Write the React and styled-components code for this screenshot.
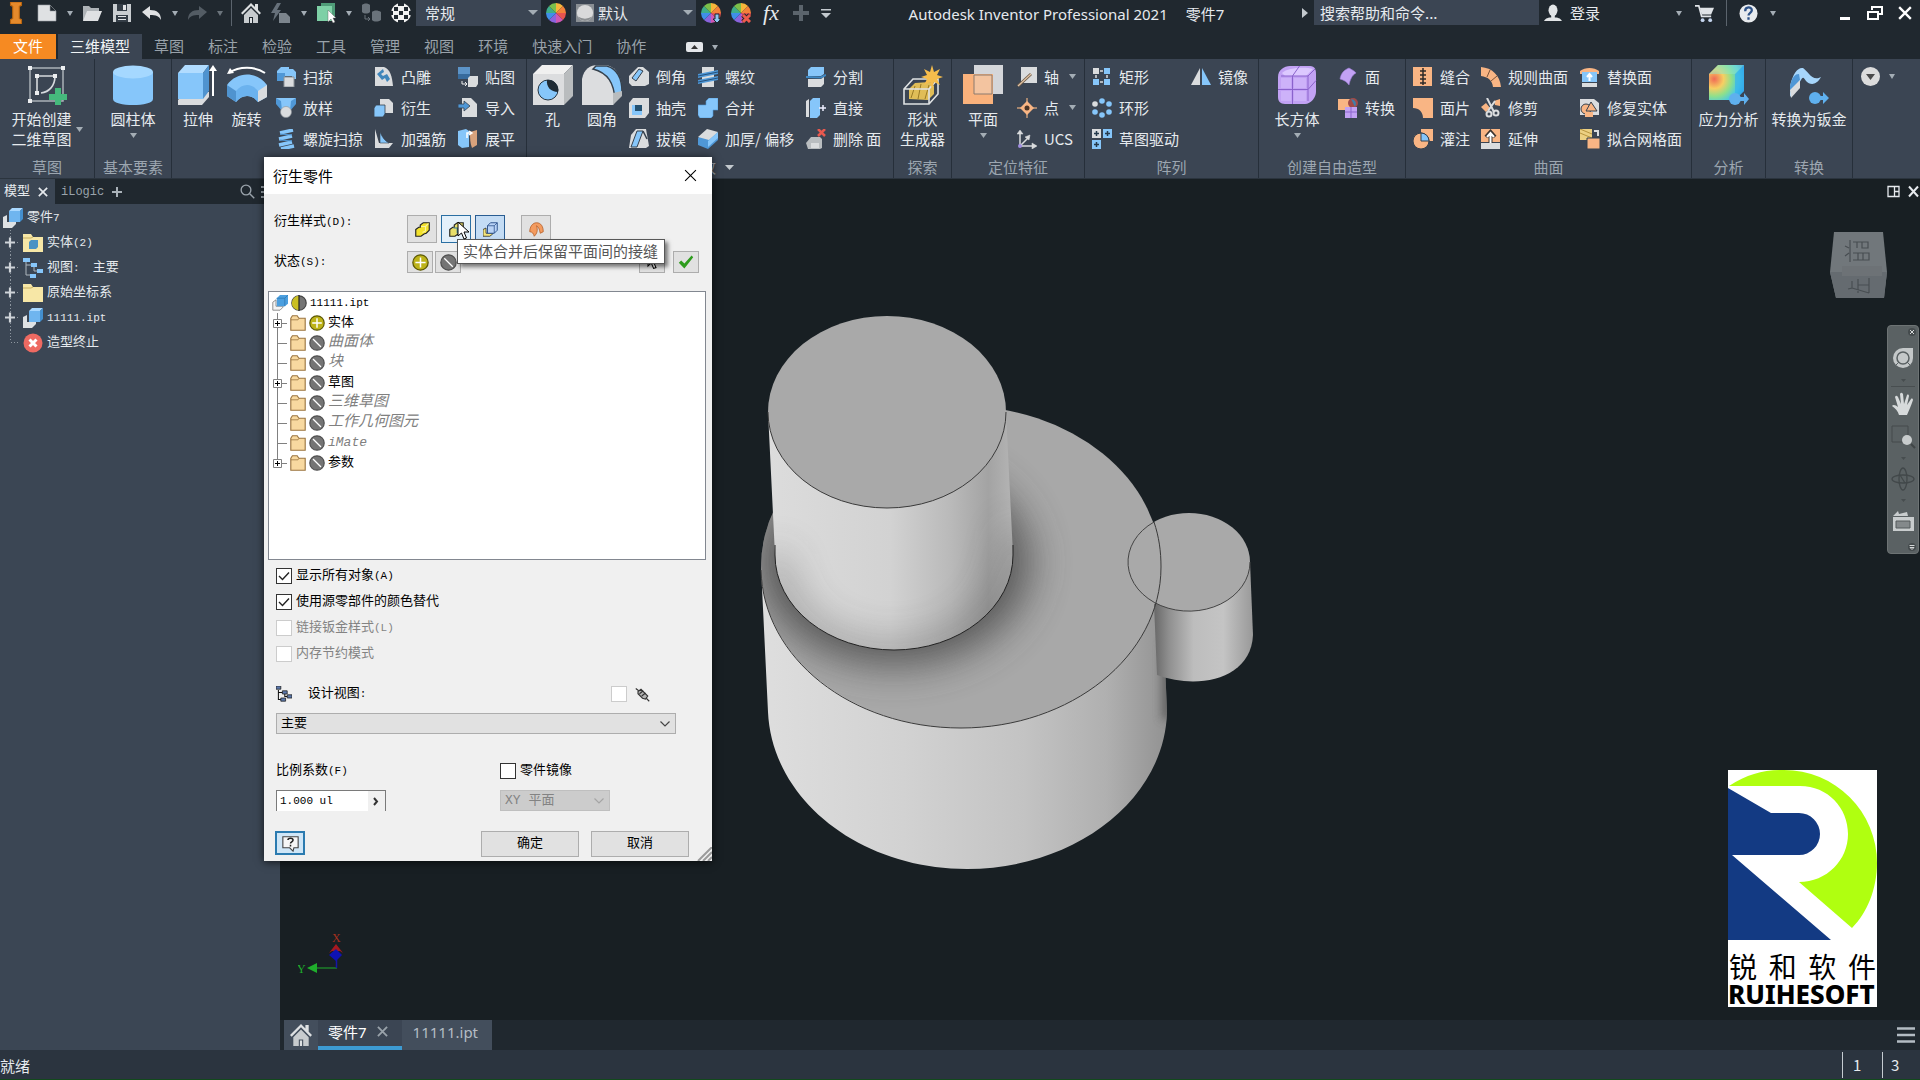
import React, { useState } from 'react'
import styled, { createGlobalStyle, css } from 'styled-components'

const sans = '"Noto Sans", "Noto Sans CJK SC", sans-serif'
const cjk = '"Noto Sans CJK SC", sans-serif'
const mono = '"Liberation Mono", "Noto Sans CJK SC", monospace'

const GlobalStyle = createGlobalStyle`
    * { box-sizing: border-box; }
    body {
        margin: 0;
        background: #181f23;
        font-family: ${sans};
        font-size: 15px;
        line-height: 20px;
        overflow: hidden;
    }
    button, input, select {
        font: inherit;
        color: inherit;
        margin: 0;
        padding: 0;
        border: 0;
        border-radius: 0;
        background: none;
        appearance: none;
        outline: none;
    }
    svg { display: block; flex: none; }
`
const Page = styled.div`
    display: flex;
    flex-direction: column;
    height: 100vh;
    color: #e6eaee;
    white-space: nowrap;
`
/* ---------- title bar ---------- */
const TitleBar = styled.header`
    display: flex;
    height: 34px;
    background: #20282f;
`
const Tool = styled.button`
    display: flex;
    align-items: center;
    justify-content: center;
    gap: 9px;
    width: ${props => props.$w || 30}px;
    height: 26px;
    flex: none;
`
const FormulaTool = styled(Tool)`
    font: italic 22px/22px "Liberation Serif", serif;
`
const Divider = styled.div`
    width: 1px;
    height: 26px;
    margin: 0 4px;
    background: #5b646d;
`
const ComboBox = styled.div`
    position: relative;
    display: flex;
    align-items: center;
    gap: 4px;
    width: 125px;
    height: 26px;
    padding-left: ${props => props.$icon ? 5 : 9}px;
    background: #3b4553;
    svg:last-child {
        position: absolute;
        right: 3px;
        top: 10px;
        pointer-events: none;
    }
`
const ComboSelect = styled.select`
    flex: 1;
    height: 26px;
    font-family: ${cjk};
`
const Title = styled.h1`
    display: flex;
    flex: 1;
    justify-content: center;
    gap: 18px;
    margin: 0;
    padding-top: 4px;
    font-size: 15px;
    font-weight: 400;
`
const Search = styled.input`
    width: 225px;
    height: 25px;
    margin-left: 2px;
    padding: 0 6px 1px;
    background: #3b4553;
    font-family: ${cjk};
    &::placeholder { color: #e6eaee; opacity: 1; }
`
const Login = styled.button`
    display: flex;
    align-items: center;
    gap: 8px;
    width: 132px;
    height: 26px;
    padding-left: 5px;
    font-family: ${cjk};
`
const WindowButtons = styled.div`
    display: flex;
    margin-left: 50px;
`
/* ---------- ribbon ---------- */
const TabBar = styled.nav`
    display: flex;
    height: 25px;
    background: #20282f;
`
const Tab = styled.button`
    height: 25px;
    padding: 0 12px 2px;
    font-family: ${cjk};
    color: #99a2aa;
    ${props => props.$active && css`
        background: #3b4553;
        color: #f0f3f5;
    `}
    ${props => props.$file && css`
        padding: 0 13px 2px;
        margin-right: 2px;
        background: #f68a22;
        color: #fff;
    `}
`
const Ribbon = styled.section`
    display: flex;
    height: 120px;
    background: #3b4553;
    border-bottom: 1px solid #2b343e;
    font-family: ${cjk};
`
const Group = styled.div`
    display: flex;
    flex-direction: column;
    flex: none;
    width: ${props => props.$w}px;
    border-right: 1px solid #262f3a;
`
const GroupBody = styled.div`
    display: flex;
    flex: 1;
    padding-top: 2px;
`
const Caption = styled.div`
    display: flex;
    align-items: center;
    justify-content: center;
    gap: 9px;
    height: 24px;
    padding-top: 2px;
    color: #9ca6b0;
`
const BigButton = styled.button`
    display: flex;
    flex-direction: column;
    align-items: center;
    flex: none;
    width: ${props => props.$w}px;
    height: 92px;
    padding-top: 4px;
    > span { margin-top: 4px; }
    > svg + span ~ svg { margin-top: 4px; }
`
const TwoLines = styled.span`
    display: flex;
    align-items: center;
    text-align: center;
    gap: 4px;
`
const Columns = styled.div`
    display: flex;
    padding-left: ${props => props.$pad ?? 7}px;
`
const Column = styled.div`
    width: ${props => props.$w || 90}px;
`
const SmallButton = styled.button`
    display: flex;
    align-items: center;
    gap: 7px;
    width: 100%;
    height: 31px;
    svg:last-child:not(:first-child) { margin-left: auto; }
`
const RibbonMenu = styled(Tool)`
    margin-top: 4px;
`
/* ---------- workspace ---------- */
const Workspace = styled.main`
    position: relative;
    display: flex;
    flex: 1;
    min-height: 0;
`
const Browser = styled.aside`
    width: 280px;
    flex: none;
    background: #3b4654;
    font-family: ${mono};
    font-size: 13px;
`
const BrowserTabs = styled.div`
    display: flex;
    align-items: center;
    height: 25px;
    background: #20282f;
    padding-right: 16px;
    gap: 6px;
`
const BrowserTab = styled.button`
    display: flex;
    align-items: center;
    gap: 8px;
    height: 25px;
    padding-left: 4px;
    ${props => !props.$active && css`
        padding-left: 0;
        font-size: 12px;
        color: #9aa3ab;
    `}
    ${props => props.$active && css`
        width: 55px;
        background: #3b4654;
    `}
`
const Spacer = styled.div`
    flex: 1;
`
const Gap = styled.span`
    width: ${props => props.$w}px;
`
const Nodes = styled.ul`
    list-style: none;
    margin: 0;
    padding: 1px 0 0;
`
const Node = styled.li`
    display: flex;
    align-items: center;
    gap: 4px;
    height: 25px;
    padding-left: ${props => props.$root ? 3 : 0}px;
`
const Latin = styled.span`
    font-family: "Liberation Mono", monospace;
    font-size: ${props => props.$big ? 13 : 11}px;
`
const ViewArea = styled.div`
    display: flex;
    flex-direction: column;
    flex: 1;
    min-width: 0;
`
const Viewport = styled.div`
    position: relative;
    flex: 1;
    background: #181f23;
`
const Placed = styled.div`
    position: absolute;
    left: ${props => props.$left}px;
    right: ${props => props.$right}px;
    top: ${props => props.$top}px;
    bottom: ${props => props.$bottom}px;
`
const NavBar = styled.div`
    position: absolute;
    right: 1px;
    top: 146px;
    display: flex;
    flex-direction: column;
    align-items: center;
    width: 32px;
    height: 229px;
    padding: 2px 0;
    border: 1px solid #6d7374;
    border-radius: 4px;
    background: #5a6163;
`
const Watermark = styled.div`
    position: absolute;
    right: 43px;
    bottom: 13px;
    width: 149px;
    height: 237px;
    background: #fff;
    color: #000;
`
const BrandCjk = styled.div`
    display: flex;
    justify-content: space-between;
    padding: 11px 1px 0;
    font: 28px/30px ${cjk};
`
const BrandLatin = styled.div`
    font: 800 26px/26px "Noto Sans", sans-serif;
`
const DocTabs = styled.div`
    display: flex;
    height: 30px;
    padding-left: 4px;
    padding-right: 5px;
    background: #20282f;
`
const DocTab = styled.button`
    display: flex;
    align-items: center;
    gap: 10px;
    padding: 0 6px;
    height: 30px;
    background: #434e5c;
    color: #b4bcc4;
    ${props => !props.$active && !props.$home && css`padding: 0 14px 7px 11px;`}
    ${props => props.$active && css`
        padding: 0 14px 3px 10px;
        background: #3b4553;
        border-bottom: 4px solid #3d9bd3;
        color: #fff;
    `}
`
const StatusBar = styled.footer`
    display: flex;
    height: 30px;
    padding-top: 2px;
    background: #2b343f;
    border-bottom: 1px solid #12491c;
    line-height: 28px;
    font-family: ${cjk};
`
const Count = styled.div`
    width: ${props => props.$w}px;
    height: 26px;
    padding-left: ${props => props.$pad}px;
    border-left: 1px solid #c6ccd2;
    line-height: 25px;
`
/* ---------- dialog ---------- */
const Dialog = styled.form`
    position: absolute;
    z-index: 2;
    left: 264px;
    top: -22px;
    width: 448px;
    height: 704px;
    background: #f0f0f0;
    color: #000;
    font-family: ${mono};
    font-size: 13px;
    line-height: 14px;
    box-shadow: 0 1px 8px rgba(0, 0, 0, 0.7);
`
const DialogTitle = styled.div`
    display: flex;
    align-items: center;
    justify-content: space-between;
    height: 37px;
    padding: 0 15px 0 9px;
    background: #fff;
    font: 15px/20px ${cjk};
`
const Line = styled.div`
    display: flex;
    align-items: ${props => props.$align || 'flex-start'};
    gap: ${props => props.$gap || 0}px;
    margin-top: ${props => props.$mt || 0}px;
    padding: 0 ${props => props.$pr ?? 13}px 0 ${props => props.$pl ?? 10}px;
`
const Buttons = styled.div`
    display: flex;
    gap: 4px;
`
const FieldName = styled.span`
    width: ${props => props.$w || 133}px;
`
const IconButton = styled.button`
    display: flex;
    align-items: center;
    justify-content: center;
    width: ${props => props.$small ? 26 : 30}px;
    height: ${props => props.$small ? 22 : 28}px;
    border: 1px solid #adadad;
    background: #e1e1e1;
    ${props => props.$hot && css`
        border-color: #2a6fa3;
        background: #e3f0fa;
    `}
    ${props => props.$on && css`
        border-color: #2a5d92;
        background: #c4dcf4;
    `}
`
const ObjectTree = styled.ul`
    list-style: none;
    height: 269px;
    margin: 18px 6px 0 4px;
    padding: 1px 0 0 3px;
    border: 1px solid #828790;
    background: #fff;
`
const ObjectRow = styled.li`
    display: flex;
    align-items: center;
    gap: 3px;
    height: 20px;
    ${props => props.$off && css`
        color: #808080;
        font-size: 15px;
        font-style: italic;
    `}
`
const Checks = styled.div`
    padding: 3px 12px 0;
`
const CheckLabel = styled.label`
    display: flex;
    align-items: center;
    gap: 4px;
    height: ${props => props.$h || 26}px;
    color: ${props => props.$off ? '#838383' : '#000'};
`
const CheckBox = styled.input.attrs({ type: 'checkbox' })`
    width: 16px;
    height: 16px;
    border: 1px solid #333;
    background: #fff;
    &:disabled { border-color: #ccc; }
    &:checked {
        background: #fff url("data:image/svg+xml,%3Csvg xmlns='http://www.w3.org/2000/svg' viewBox='0 0 14 14'%3E%3Cpath d='M2 7l3.5 3.5L12 3.5' fill='none' stroke='%23222' stroke-width='1.4'/%3E%3C/svg%3E");
    }
`
const SelectBox = styled.div`
    position: relative;
    width: ${props => props.$w}px;
    height: 21px;
    border: 1px solid ${props => props.$off ? '#bfbfbf' : '#adadad'};
    background: ${props => props.$off ? '#ccc' : '#e1e1e1'};
    color: ${props => props.$off ? '#838383' : '#000'};
    select {
        width: 100%;
        height: 19px;
        padding-left: 4px;
        opacity: 1;
    }
    svg {
        position: absolute;
        right: 5px;
        top: 7px;
        pointer-events: none;
    }
`
const ScaleGrid = styled.div`
    display: grid;
    grid-template-columns: 224px 110px;
    row-gap: 9px;
    align-items: center;
    margin-top: 27px;
    padding-left: 12px;
`
const NumberBox = styled.div`
    display: flex;
    align-items: center;
    width: 110px;
    height: 21px;
    border: 1px solid #7a7a7a;
    border-bottom: 0;
    input {
        width: 91px;
        height: 20px;
        padding-left: 3px;
        background: #fff;
        font-size: 11px;
    }
    button { width: 17px; padding-left: 5px; }
`
const PushButton = styled.button`
    width: 98px;
    height: 26px;
    border: 1px solid #adadad;
    background: #e1e1e1;
`
const HelpButton = styled.button`
    display: flex;
    align-items: center;
    justify-content: center;
    width: 30px;
    height: 24px;
    border: 2px solid #2b7bb0;
    background: #cfe6f7;
`
const Tooltip = styled.div`
    position: absolute;
    left: 193px;
    top: 82px;
    height: 25px;
    padding: 0 6px 0 5px;
    border: 1px solid #575757;
    background: #fff;
    box-shadow: 3px 3px 4px rgba(0, 0, 0, 0.5);
    color: #575757;
    font: 15px/22px ${cjk};
`
const Pointer = styled.svg`
    position: absolute;
    left: 193px;
    top: 64px;
    z-index: 1;
`
const Grip = styled.svg`
    position: absolute;
    right: 0;
    bottom: 0;
`

/* ---------- drawings ---------- */
const B = '#86c6fa'
const D = '#4f97d6'
const G = '#dadcde'
const O = '#f9b584'
const P = '#c2a2f4'
const K = '#35404c'

const Icon = ({ name, size = 20 }) => (
    <svg width={size} height={size} viewBox="0 0 20 20" fill="none" aria-hidden="true">{small[name]}</svg>
)
const Large = ({ name }) => (
    <svg width="40" height="40" viewBox="0 0 40 40" fill="none" aria-hidden="true">{large[name]}</svg>
)
const Caret = ({ w = 7, color = '#a4adb5' }) => (
    <svg width={w} height="5" viewBox="0 0 8 5" preserveAspectRatio="none" aria-hidden="true"><path d="M0 0h8L4 5z" fill={color} /></svg>
)
const Chevron = ({ color = '#444' }) => (
    <svg width="10" height="6" viewBox="0 0 10 6" fill="none" aria-hidden="true"><path d="M.5.5L5 5 9.5.5" stroke={color} strokeWidth="1.2" /></svg>
)
const Cross = ({ size = 12, color = '#e6eaee', sw = 1.5 }) => (
    <svg width={size} height={size} viewBox="0 0 12 12" aria-hidden="true"><path d="M1 1l10 10M11 1L1 11" stroke={color} strokeWidth={sw} /></svg>
)
// eight slices, clockwise from the top
const wheel = (
    <g>
        <path d="M10 10V0a10 10 0 0 1 7 3z" fill="#f7b53a" />
        <path d="M10 10l7-7a10 10 0 0 1 3 7z" fill="#f3823a" />
        <path d="M10 10h10a10 10 0 0 1-3 7z" fill="#e8544e" />
        <path d="M10 10l7 7a10 10 0 0 1-7 3z" fill="#cf57b4" />
        <path d="M10 10v10a10 10 0 0 1-7-3z" fill="#8a63dd" />
        <path d="M10 10l-7 7a10 10 0 0 1-3-7z" fill="#3f8fe8" />
        <path d="M10 10H0a10 10 0 0 1 3-7z" fill="#3fae8a" />
        <path d="M10 10L3 3a10 10 0 0 1 7-3z" fill="#7cc04a" />
    </g>
)
const houseShape = (
    <g>
        <path d="M10 0L0 10l1.500 1.500L10 3l8.500 8.500L20 10l-3-3V1h-3v3z" fill="#dde0e2" />
        <path d="M3 12l7-7 7 7v8h-5v-6H8v6H3z" fill="#c7cbce" />
        <path d="M9 15h2v5H9z" fill="#dde0e2" />
    </g>
)
const part = (
    <g>
        <path d="M0 9l4-2v7h9v2l-4 4H0z" fill="#dfe2e4" />
        <path d="M6 3l3-3h11l-3 3z" fill="#a9d8ff" />
        <path d="M6 3h11v11H6z" fill="#6fb5ef" />
        <path d="M17 3l3-3v11l-3 3z" fill="#438fcf" />
    </g>
)
const small = {
    wheel,
    home: houseShape,
    part,
    logo: <path d="M5 0h10v3l-2 1v11l2 1v4H5v-4l2-1V4L5 3z" fill="#e58a2c" stroke="#b8640f" />,
    newDoc: <path d="M1 2h12l6 6v10H1z M13 2v6h6" fill="#dfe1e3" stroke="#9aa0a5" strokeWidth=".6" />,
    open: <g><path d="M1 18V3h6l2 2h8v3" fill="#aeb3b7" /><path d="M1 18L5 8h15l-4 10z" fill="#dfe1e3" /></g>,
    save: <g><path d="M1 1h18v18H1z" fill="#c9cdd0" /><path d="M5 1h10v7H5zM4 12h12v7H4z" fill="#343d46" /><path d="M11 2h3v5h-3zM6 13h8v1H6zM6 16h8v1H6z" fill="#e2e4e6" /></g>,
    undo: <path d="M0 9l8-6v4c7 0 11 3 11 10-2-4-5-5-11-5v4z" fill="#dfe1e3" />,
    redo: <path d="M20 9l-8-6v4C5 7 1 10 1 17c2-4 5-5 11-5v4z" fill="#535c64" />,
    update: <g><path d="M6 0L0 10h4L2 18l8-11H6l4-7z" fill="#66707a" /><path d="M8 10h7l4 4v6H8z" fill="#7c858d" /></g>,
    pick: <g><path d="M5 0h14v14H5z" fill="#4f9c78" /><path d="M1 3h15v15H1z" fill="#7ed0a6" /><path d="M12 7v12l3-3 2 4 2-1-2-4h3z" fill="#fff" stroke="#555" strokeWidth=".4" /></g>,
    material: <g fill="#6a737b"><path d="M1 2c2-2 6-2 8 0v7c-2 2-6 2-8 0zM11 9c2-2 6-2 9 0v8c-3 2-7 2-9 0z" /><path d="M4 12v4h5M7 14l2 2-2 2" stroke="#6a737b" fill="none" /></g>,
    checker: <g><circle cx="10" cy="10" r="10" fill="#f2f2f2" /><path d="M7 0h6v3H7zM3 4h4v4H3zM13 4h4v4h-4zM8 8h4v4H8zM0 8h2v4H0zM18 8h2v4h-2zM3 12h4v4H3zM13 12h4v4h-4zM7 17h6v3H7z" fill="#20282f" /></g>,
    sphere: <g><path d="M0 0h20v20H0z" fill="#8a8f94" /><circle cx="10" cy="10" r="9" fill="#d9dadb" /><path d="M2 14a9 9 0 0 0 16 0 16 16 0 0 1-16 0z" fill="#8b8f92" /></g>,
    wheelAdd: <g>{wheel}<path d="M14 11h4v5h2l-4 4-4-4h2z" fill="#8cc4f0" stroke="#20282f" /></g>,
    wheelDel: <g>{wheel}<path d="M12 12l7 7M19 12l-7 7" stroke="#20282f" strokeWidth="5" /><path d="M12 12l7 7M19 12l-7 7" stroke="#ee5a4c" strokeWidth="3" /></g>,
    plus: <path d="M8 2h4v6h6v4h-6v6H8v-6H2V8h6z" fill="#5b646c" />,
    user: <g fill="#e2e5e7"><ellipse cx="10" cy="7" rx="5" ry="6.500" /><path d="M8 12h4v3c5 0 7 2 8 4H0c1-2 3-4 8-4z" /></g>,
    cart: <g><path d="M0 2h4l3 11h10" stroke="#dfe3e7" strokeWidth="1.800" /><path d="M5 4h15l-3 7H7z" fill="#dfe3e7" /><circle cx="8" cy="17" r="2" fill="#c5d5ee" /><circle cx="16" cy="17" r="2" fill="#c5d5ee" /></g>,
    help: <g><circle cx="10" cy="10" r="9.500" fill="#e8ebee" /><path d="M6.500 7.500c0-5 7-5 7-.8 0 2.600-3.500 2.600-3.500 5.300M10 14v2.500" stroke="#2d5288" strokeWidth="2.400" /></g>,
    sweep: <g><path d="M1 4l4-4h8v2h4l3 3v7h-4V9H9v5H1z" fill={B} /><path d="M1 6h8v8H1z" fill={D} /><path d="M8 10h10v10H8z" fill={G} stroke="#8b9298" /></g>,
    loft: <g><path d="M0 0h20l-5 11H5z" fill={B} /><path d="M0 0l5 3 1 10-6-7zM20 0l-5 3-1 10 6-7z" fill={D} /><circle cx="10" cy="14" r="5.500" fill={G} stroke="#8b9298" strokeWidth=".6" /></g>,
    coil: <g stroke={B} strokeWidth="3.500"><path d="M4 4l13-3M3 10l13-3M3 16l13-3M5 20l13-3" /><path d="M4 5l12 1M4 11l12 1" stroke={D} strokeWidth="1" /></g>,
    emboss: <g><path d="M1 0h9c6 2 8 9 9 19H1z" fill={G} /><path d="M3 7l6-5 1 3-3 2 2 2 4-2 3 5-3 3-2-4-3 2z" fill="#3f86bb" /></g>,
    derive: <g><path d="M6 1h9l4 4v10H6z" fill={G} /><path d="M0 10l2-3h9v9l-2 3H0z" fill={B} stroke={K} strokeWidth=".8" /></g>,
    rib: <g><path d="M1 0l4 14h14l-4 5H1z" fill={G} /><path d="M6 3v11h9c-4-2-7-6-9-11z" fill={B} stroke={K} strokeWidth=".6" /></g>,
    decal: <g><path d="M0 0h12v12H0z" fill="#5c94c8" /><path d="M0 7h12v5H0z" fill="#376b9d" /><path d="M10 11l2-2h8v8l-2 3h-8z" fill={G} /><path d="M4 14v3h5M7 15l2 2-2 2" stroke="#eee" /></g>,
    importIcon: <g><path d="M4 0h9l6 6v13H4z" fill={G} /><path d="M0 6h6V3l6 5-6 5v-3H0z" fill={D} stroke={K} strokeWidth=".8" /></g>,
    unfold: <g><path d="M0 2l8-2 3 2v16l-7 1-4-3z" fill={B} /><path d="M12 3l7-2v15l-5 3c-2-5-2-10-2-16z" fill="#d8a27c" /><path d="M9 9V4h4M11 2l3 2-3 2" stroke="#fff" strokeWidth="1.500" /></g>,
    chamfer: <g><path d="M0 9l9-9h5l6 5v12l-4 2H3l-3-3z" fill={G} /><path d="M3 11l7-9 4 2-7 10z" fill={B} stroke={K} /></g>,
    shell: <g><path d="M0 5l4-5h16v15l-4 5H0z" fill={G} /><path d="M3 7h10v10H3z" fill="#24506f" /><path d="M3 7h3v6h7v4H3z" fill={B} /></g>,
    draft: <g><path d="M2 6l5-6h10l3 17-3 2H0z" fill={G} /><path d="M8 2h6L8 18H2z" fill={B} stroke={K} /><path d="M14 2l4 8" stroke={K} strokeWidth="1.500" /></g>,
    thread: <g><path d="M4 0h12v20H4z" fill={G} /><path d="M0 7l20-4v4L0 11zM0 13l20-4v4L0 17z" fill={D} /><path d="M0 9l20-4M0 15l20-4" stroke="#27527a" /></g>,
    combine: <path d="M8 3l3-3h9v12h-5v6l-2 2H2l-2-3V7h8z" fill={B} stroke={D} strokeWidth=".6" />,
    thicken: <g><path d="M0 9l9-8 11 3v7L10 20 0 16z" fill={D} /><path d="M0 8l9-8 11 3-9 8z" fill={G} /><path d="M10 12l10-9v6l-10 9z" fill={B} /></g>,
    split: <g><path d="M2 3l3-3h13v7l-3 2H2z" fill={B} /><path d="M0 10l15 .5L20 8" stroke="#3e88c4" strokeWidth="2" /><path d="M2 12h13l3-2v7l-3 3H2z" fill={G} /></g>,
    direct: <g><path d="M0 3l3-2v18H0z" fill={G} /><path d="M4 3l3-3h7v17l-3 3H4z" fill={B} /><path d="M13 10h7M17 7v6" stroke="#eef" strokeWidth="1.500" /></g>,
    deleteFace: <g><path d="M0 14l5-6h9l2 2v9l-2 1H2z" fill="#b9bdc0" /><path d="M5 14h8v5H5z" fill={G} /><path d="M12 0l7 7M19 0l-7 7" stroke="#e8594f" strokeWidth="2.500" /></g>,
    axis: <g><path d="M4 0h16v16H4z" fill={G} /><path d="M1 19L14 7" stroke="#6c5a48" strokeWidth="3" /><path d="M1 19L14 7" stroke="#e2c4a6" strokeWidth="1.200" /></g>,
    point: <g><path d="M10 0v20M0 10h20" stroke="#c89b78" strokeWidth="1.500" /><path d="M10 3l7 7-7 7-7-7z" fill={O} /><circle cx="10" cy="10" r="2.500" fill="#4b3527" /></g>,
    ucs: <g stroke={G} strokeWidth="1.500"><path d="M3 2v15h16M3 17l9-9" /><path d="M0 5l3-4 3 4zM15 14l5 3-5 3zM8 8l5-2-1 5z" fill={G} strokeWidth=".5" /><circle cx="3" cy="17" r="2" fill="#9f8de0" stroke="none" /></g>,
    rect: <g><path d="M1 1h6v6H1z" fill={G} /><path d="M12 1h6v6h-6zM1 12h6v6H1zM12 12h6v6h-6z" fill={B} /><path d="M8 4h3M4 8v3M15 8v3M8 15h3" stroke={G} strokeWidth="1.500" /></g>,
    ring: <g fill={B}><circle cx="10" cy="3" r="2.800" /><circle cx="17" cy="6" r="2.800" /><circle cx="17" cy="14" r="2.800" /><circle cx="10" cy="17" r="2.800" /><circle cx="3" cy="14" r="2.800" /><circle cx="3" cy="6" r="2.800" fill={G} /></g>,
    sketchDriven: <g><path d="M0 0h9v9H0z" fill={G} /><path d="M11 0h9v9h-9zM0 11h9v9H0z" fill={B} /><path d="M2 4.500h5M4.500 2v5M13 4.500h5M15.500 2v5M2 15.500h5M4.500 13v5" stroke="#263a4c" strokeWidth="1.500" /></g>,
    mirror: <g><path d="M9 1v17H0z" fill={G} /><path d="M11 1v17h9z" fill={B} /></g>,
    face: <path d="M2 12C3 6 6 3 11 1c3 2 6 3 7 5-4 2-6 7-7 12-2-3-5-5-9-6z" fill={P} stroke="#9e7cd8" strokeWidth=".6" />,
    convert: <g><path d="M0 1h12v11H0z" fill={O} /><circle cx="15" cy="5" r="5" fill="#a04b48" /><path d="M13 1a5 5 0 0 1 4 8z" fill="#3f7fa8" /><path d="M7 9h12v11H7z" fill={P} /><path d="M13 9v11M7 14h12" stroke="#8d66cf" /></g>,
    stitch: <g><path d="M0 0h19v19H0z" fill={O} /><path d="M10 1v17M7 4h6M7 8h6M7 12h6M7 16h6" stroke="#2e2a28" strokeWidth="1.500" /></g>,
    patch: <path d="M0 0h20v20H10c0-6-4-10-10-10z" fill={O} />,
    sculpt: <g><path d="M8 0h12v12H8z" fill={O} /><circle cx="8" cy="12" r="8" fill={O} stroke={K} /><path d="M8 4v8h8a8 8 0 0 0-8-8z" fill={B} stroke={K} /></g>,
    ruled: <g><path d="M0 0c11 1 19 8 20 20h-8C11 13 7 10 0 9z" fill={O} /><path d="M9 3L6 10M16 9l-6 5" stroke="#7a5238" /></g>,
    trim: <g><path d="M0 9l5-4 4 5-4 4zM13 3l6-2v7l-5-1z" fill={O} /><path d="M6 0l7 14M14 3L7 13" stroke={G} strokeWidth="2" /><circle cx="8" cy="16" r="2.500" stroke={G} strokeWidth="2" /><circle cx="15" cy="15" r="2.500" stroke={G} strokeWidth="2" /></g>,
    extend: <g><path d="M0 0h19v13H0z" fill={O} /><path d="M0 14h19v6H0z" fill={G} /><path d="M9.500 14V4M5 8l4.500-5L14 8" stroke="#3b3430" strokeWidth="4" /><path d="M9.500 14V4M6 8l3.500-4L13 8" stroke="#fff" strokeWidth="2" /></g>,
    replace: <g><path d="M0 4c5-4 14-4 19 0v3H0z" fill={O} /><path d="M2 5h15v10H2z" fill={B} /><path d="M2 16h15v4H2z" fill={G} /><path d="M9.500 14V8M7 10l2.500-3L12 10" stroke="#fff" strokeWidth="2" /></g>,
    repair: <g><path d="M0 1h14l5 4v12H0z" fill={G} /><circle cx="6" cy="11" r="5" fill={O} stroke={K} /><path d="M11 4l6 9H6z" fill={O} stroke={K} /><path d="M5 14h8v5H5z" fill={O} /></g>,
    fitMesh: <g><path d="M0 0h12v11H0z" fill="#ecd083" /><path d="M0 4l12 5M0 0l12 5" stroke="#b7953e" /><path d="M14 2h4v5" stroke={G} strokeWidth="2" /><path d="M7 9h13v11H7z" fill={O} stroke={K} /></g>,
    folderPart: <g><path d="M0 1h8l2 3h10v15H0z" fill="#f7e7a6" /><path d="M0 5h8l2-1" stroke="#c9b060" /><path d="M6 9l2-2h7v7l-2 2H6z" fill="#4b93c4" /></g>,
    folder: <g><path d="M0 1h8l2 3h10v15H0z" fill="#f7e7a6" /><path d="M0 5h8l2-1" stroke="#c9b060" /></g>,
    views: <g><path d="M0 0h7v4H0zM8 5h6v4H8zM14 11h6v4h-6zM7 16h6v4H7z" fill={B} /><path d="M3 4v13h4M3 7h5M11 9v4h3" stroke="#aeb6bd" /></g>,
    end: <g><circle cx="10" cy="10" r="9.500" fill="#ee6a62" /><path d="M6.500 6.500l7 7M13.500 6.500l-7 7" stroke="#fff" strokeWidth="3" /></g>,
    search: <g stroke="#9aa3ab" strokeWidth="1.800"><circle cx="8" cy="8" r="6.500" /><path d="M13 13l6 6" /></g>,
    // dialog icons
    bodyMerge: <g><path d="M1 10l4-3h2V4l4-3h8v10l-4 4-3 1-4 3H1z" fill="#f3e22c" stroke="#222" strokeWidth="1.500" /><path d="M8 6h6l4-4M14 6v6l-4 2" stroke="#fbf4a0" strokeWidth="1.500" /></g>,
    bodySeam: <g><path d="M1 10l4-3h2V4l4-3h8v10l-4 4-3 1-4 3H1z" fill="#e9df6a" stroke="#222" strokeWidth="1.500" /><path d="M6 8h5v7" stroke="#2c7ba8" strokeWidth="1.500" /></g>,
    bodyMulti: <g><path d="M0 10l4-2v7h9v1l-4 3H0z" fill="#f4e57a" stroke="#222" /><path d="M6 5l4-4h9v10l-4 4H6z" fill="#b9d3f6" stroke="#234a86" strokeWidth="1.200" /><path d="M6 5h9v10M15 5l4-4" stroke="#234a86" /></g>,
    surface: <path d="M1 13C1 6 5 1 10 1c6 0 9 5 9 12l-4 2c-1-5-2-8-5-10 2 6 1 10-3 14-1-4-3-6-6-6z" fill="#f39b5f" stroke="#b0571f" />,
    include: <g><circle cx="10" cy="10" r="9" fill="#bdb319" stroke="#5d5906" strokeWidth="1.500" /><path d="M10 4v12M4 10h12" stroke="#fff" strokeWidth="1.800" /></g>,
    exclude: <g><circle cx="10" cy="10" r="9" fill="#747474" stroke="#505050" strokeWidth="1.500" /><path d="M5 5l10 10" stroke="#fff" strokeWidth="1.500" /></g>,
    half: <g><circle cx="10" cy="10" r="9" fill="#747474" stroke="#444" strokeWidth="1.500" /><path d="M10 1a9 9 0 0 0 0 18z" fill="#cabf23" /><path d="M10 0v20" stroke="#222" strokeWidth="1.500" /></g>,
    treeFolder: <g><path d="M1 4l2-3h6l2 3h8v15H1z" fill="#f8d9a0" stroke="#9a7440" strokeWidth="1.400" /><path d="M1 6h9l2-2" stroke="#9a7440" /></g>,
    treePart: <g><path d="M1 9l4-3v8h9v1l-4 4H1z" fill="#f4f4f4" stroke="#777" /><path d="M6 4l4-4h10v11l-4 3H6z" fill="#4b9fdf" /><path d="M6 4h10v10M16 4l4-4" stroke="#2f78b4" /></g>,
    tick: <path d="M1 11l3-3 4 4L17 2l2 2L8 18z" fill="#2e9c1d" />,
    arrow: <path d="M5 1v14l4-4 3 7 3-1-3-7h5z" fill="#fff" stroke="#000" strokeWidth="1.300" />,
    designView: <g><path d="M0 0h6v4H0zM8 6h6v4H8zM14 11h6v4h-6zM6 15h6v4H6z" fill="#5c79ad" stroke="#222" /><path d="M3 5v12h3M3 8h5M11 10v3h3" stroke="#111" strokeWidth="1.300" /></g>,
    link: <g stroke="#333" strokeWidth="1.500"><path d="M1 2l4 3M15 15l4 4" /><path d="M4 6l4-3 9 9-3 4-4-1-6-6z" fill="#b3b3b3" /><path d="M6 9l5-4M9 12l5-4" /></g>,
    helpBubble: <g><path d="M1 2h18v13h-5l-1 4-4-4H1z" fill="#f6f6f6" stroke="#444" strokeWidth="1.300" /><path d="M7 6c0-3 6-3 6 0 0 2-3 2-3 4M10 11.500v2" stroke="#222" strokeWidth="1.800" /></g>,
}
const large = {
    sketch: <g><path d="M3 3h33v33H3z" stroke="#aab1b8" strokeWidth="1.500" /><path d="M1 1h4v4H1zM34 1h4v4h-4zM1 34h4v4H1z" fill="#eceef0" /><path d="M10 12v16M11 11h17c0 10-6 16-14 17" stroke="#d7dade" strokeWidth="1.600" /><path d="M8 9h4v4H8zM26 9h4v4h-4zM8 26h4v4H8z" fill="#eceef0" /><path d="M28 23h6v6h6v6h-6v5h-6v-5h-6v-6h6z" fill="#45b97c" /></g>,
    cylinder: <g><path d="M0 7v27c0 8 40 8 40 0V7z" fill={B} /><ellipse cx="20" cy="7" rx="20" ry="6.500" fill="#a5d8ff" /></g>,
    extrude: <g><path d="M0 35l8-8h23v5l-7 8H0z" fill={G} /><path d="M0 8l7-8h24l-6 8z" fill="#b1dcff" /><path d="M0 8h25v26H0z" fill={B} /><path d="M25 8l6-8v26l-6 8z" fill="#4f93cf" /><path d="M35 31V3" stroke="#fff" strokeWidth="2" /><path d="M31 6l4-6 4 6z" fill="#fff" /></g>,
    revolve: <g><path d="M0 20c10-14 30-14 40 0v12l-9 5c-6-8-16-8-22 0l-9-6z" fill={B} /><path d="M0 20l9 6v11l-9-6z" fill="#4f93cf" /><path d="M31 26l9-6v12l-9 5z" fill={G} /><path d="M9 26c6-8 16-8 22 0v11c-6-8-16-8-22 0z" fill="#6bb2ee" /><path d="M2 8c10-7 26-7 36 0" stroke="#fff" strokeWidth="2" /><path d="M0 9l3-6 4 5z" fill="#fff" /></g>,
    hole: <g><path d="M0 9l9-9h31l-9 9z" fill="#f0f0f0" /><path d="M31 9l9-9v31l-9 9z" fill="#b9bcbe" /><path d="M0 9h31v31H0z" fill="#dcdddf" /><circle cx="15" cy="25" r="10" fill={B} stroke="#243544" strokeWidth="1" /><path d="M14 15a10 10 0 0 1 11 12c-7 0-12-5-11-12z" fill="#1f2b35" /></g>,
    fillet: <g><path d="M0 14C2 4 8 0 16 0h9c10 3 15 12 15 26l-9 14H0z" fill="#dcdddf" /><path d="M14 1h11c10 3 15 12 15 26l-7 8c-1-17-7-27-22-31z" fill={B} stroke={K} strokeWidth="1.500" /><path d="M31 40V28l9-2v5z" fill="#b9bcbe" /></g>,
    shape: <g><path d="M6 34V24l6-6 15-1 4 4v8l-6 6z" fill="#e0bd57" /><path d="M8 33l4-12M15 34l3-15M22 34l4-14" stroke="#9a7a25" /><path d="M1 24l9-10h25v15L26 39H1z M1 24h25v15M26 24l9-10" stroke="#dfe2e4" strokeWidth="1.600" /><path d="M29 0l2 7 6-3-3 6 6 2-6 2 3 6-6-3-2 7-2-7-6 3 3-6-6-2 6-2-3-6 6 3z" fill="#f6bd4c" /></g>,
    plane: <g><path d="M11 0h29v29H11z" fill="#d4d6da" /><path d="M0 9h30v30H0z" fill="#fab27c" /><path d="M11 10h18v19H11z" fill="#f3c4a0" stroke="#8b7b6f" /></g>,
    box: <g><path d="M1 12c0-7 6-11 12-11h20c5 0 6 4 6 8v18c0 5-5 12-11 12H8c-5 0-7-3-7-7z" fill={P} /><path d="M5 8c6-6 24-6 31-4l-7 7H8z" fill="#dcc8ff" /><path d="M4 13h10v10H4zM17 13h12v10H17zM4 26h10v10H4zM17 26h12v10H17z" fill="#cdb2f9" /><path d="M1 24.500h30l8-9M15.500 11v28M15.500 11l7-10M31 11v25M4 11h27l7-7" stroke="#8a62cc" /></g>,
    stress: (
        <g>
            <defs><radialGradient id="heat" cx="0.15" cy="0.4" r="0.9"><stop offset="0" stopColor="#f06a56" /><stop offset=".3" stopColor="#f7cf62" /><stop offset=".55" stopColor="#8fe08b" /><stop offset=".8" stopColor="#47c9e6" /><stop offset="1" stopColor="#2b8fe6" /></radialGradient></defs>
            <path d="M0 9l9-9h26v26l-9 9H0z" fill="url(#heat)" /><path d="M26 9l9-9v26l-9 9z" fill="#37b3ec" opacity=".7" /><path d="M0 9l9-9h26l-9 9z" fill="#8fe6c9" opacity=".5" />
            <circle cx="26" cy="34" r="6" fill="#5fb0ee" /><path d="M30 32h5v-4l5 6-5 6v-4h-5z" fill="#5fb0ee" />
        </g>
    ),
    sheet: <g><path d="M1 21C4 8 9 2 14 3c5 3 9 14 18 9-5 9-11 8-15 4-2-3-3-5-5-1L1 32z" fill="#a7d6fb" /><path d="M1 21C3 12 6 9 10 9l1 6L1 28z" fill="#4f97d6" /><path d="M1 25l10-10v8L2 33z" fill="#dadcde" /><circle cx="26" cy="33" r="6" fill="#5fb0ee" /><path d="M30 31h4v-4l6 6-6 6v-4h-4z" fill="#5fb0ee" /></g>,
}

const Big = ({ w, icon, label, second, menu }) => (
    <BigButton $w={w} type="button">
        <Large name={icon} />
        {second
            ? <TwoLines><span>{label}<br />{second}</span>{menu && <Caret />}</TwoLines>
            : <span>{label}</span>}
        {menu && !second && <Caret />}
    </BigButton>
)
const Small = ({ items, w }) => (
    <Column $w={w}>
        {items.map(([icon, label, menu]) => (
            <SmallButton key={label} type="button">
                <Icon name={icon} />
                <span>{label}</span>
                {menu && <Caret />}
            </SmallButton>
        ))}
    </Column>
)
const Model = () => (
    <svg width="540" height="600" viewBox="740 290 540 600" aria-label="零件7">
        <defs>
            <linearGradient id="side">
                <stop offset="0" stopColor="#dedede" /><stop offset=".35" stopColor="#d2d2d2" /><stop offset=".65" stopColor="#c3c3c3" /><stop offset=".85" stopColor="#b0b0b0" /><stop offset="1" stopColor="#929292" />
            </linearGradient>
            <linearGradient id="tall">
                <stop offset="0" stopColor="#dcdcdc" /><stop offset=".5" stopColor="#d2d2d2" /><stop offset=".75" stopColor="#b9b9b9" /><stop offset=".9" stopColor="#a3a3a3" /><stop offset="1" stopColor="#b5b5b5" />
            </linearGradient>
            <linearGradient id="pin">
                <stop offset="0" stopColor="#686868" /><stop offset=".15" stopColor="#8f8f8f" /><stop offset=".4" stopColor="#bdbdbd" /><stop offset=".7" stopColor="#c4c4c4" /><stop offset="1" stopColor="#999" />
            </linearGradient>
            <clipPath id="disc"><ellipse cx="961" cy="567" rx="200" ry="161" /></clipPath>
            <clipPath id="body"><path d="M761 567L768 712c4 88 92 157 199 157s198-69 200-157L1161 567z" /></clipPath>
            <clipPath id="tallSide"><path d="M768 412L775 555a119 95 0 0 0 238 0L1006 412z" /></clipPath>
            <filter id="blur" x="-50%" y="-50%" width="200%" height="200%"><feGaussianBlur stdDeviation="20" /></filter>
            <filter id="near" x="-100%" y="-50%" width="300%" height="200%"><feGaussianBlur stdDeviation="5" /></filter>
        </defs>
        <path d="M761 567L768 712c4 88 92 157 199 157s198-69 200-157L1161 567z" fill="url(#side)" />
        <g clipPath="url(#body)">
            <path d="M1162 640v80l12-2v-60z" fill="#555" opacity=".8" filter="url(#near)" />
        </g>
        <ellipse cx="961" cy="567" rx="200" ry="161" fill="#a8a8a8" />
        <g clipPath="url(#disc)">
            <ellipse cx="894" cy="562" rx="136" ry="103" fill="#4a4a4a" opacity=".85" filter="url(#blur)" />
        </g>
        <path d="M768 412L775 555a119 95 0 0 0 238 0L1006 412z" fill="url(#tall)" />
        <g clipPath="url(#tallSide)">
            <path d="M775 555c0 70 60 102 119 102s125-36 125-126" stroke="#444" strokeWidth="18" fill="none" opacity=".6" filter="url(#blur)" />
        </g>
        <path d="M775 545v10a119 95 0 0 0 238 0v-10" fill="none" stroke="#222" />
        <ellipse cx="887" cy="412" rx="119" ry="96" fill="#a9a9a9" />
        <path d="M768 412a119 96 0 0 0 238 0" fill="none" stroke="#3a3a3a" />
        <path d="M1154 604l3 71c40 15 94 5 96-40l-3-73z" fill="url(#pin)" />
        <ellipse cx="1189" cy="562" rx="61" ry="49" fill="#a9a9a9" />
        <path d="M1154 522a61 49 0 1 0 96 40" fill="none" stroke="#444" />
        <path d="M761 570c2 88 90 158 200 158s200-72 200-161c0-16-2-30-7-45" fill="none" stroke="#3a3a3a" />
    </svg>
)
const Branch = ({ open, last }) => (
    <svg width="15" height="20" viewBox="0 0 15 20" fill="none" aria-hidden="true">
        <path d={`M5.500 0V${last ? 10 : 20}M5.500 10.500H15`} stroke="#808080" />
        {open && <g><path d="M1.500 6.500h8v8h-8z" fill="#fff" stroke="#808080" /><path d="M3 10.500h5M5.500 8v5" stroke="#000" /></g>}
    </svg>
)
const NodeLink = ({ plus, end }) => (
    <svg width="19" height="25" viewBox="0 0 19 25" fill="none" aria-hidden="true">
        <path d={`M10.500 0V${end ? 12 : 25}M11 12.500H19`} stroke="#8d969f" strokeDasharray="1 2" />
        {plus && <path d="M5 12.500h10M10 7.500v10" stroke="#cfd4d9" strokeWidth="2.200" />}
    </svg>
)
const objects = [
    { name: '实体', open: true, icon: 'include' },
    { name: '曲面体', off: true },
    { name: '块', off: true },
    { name: '草图', open: true },
    { name: '三维草图', off: true },
    { name: '工作几何图元', off: true },
    { name: 'iMate', off: true, latin: true },
    { name: '参数', open: true, last: true },
]
const DeriveDialog = () => {
    const [all, setAll] = useState(true)
    const [color, setColor] = useState(true)
    return (
        <Dialog onSubmit={e => e.preventDefault()}>
            <DialogTitle>衍生零件<button type="button" aria-label="关闭"><Cross size={13} color="#000" sw={1} /></button></DialogTitle>
            <Line $mt={21}>
                <FieldName>衍生样式<Latin>(D):</Latin></FieldName>
                <Buttons>
                    <IconButton type="button" aria-label="合并"><Icon name="bodyMerge" size={15} /></IconButton>
                    <IconButton type="button" $hot aria-label="保留接缝"><Icon name="bodySeam" size={15} /></IconButton>
                    <IconButton type="button" $on aria-label="多实体"><Icon name="bodyMulti" size={15} /></IconButton>
                    <Gap $w={8} />
                    <IconButton type="button" aria-label="曲面"><Icon name="surface" size={15} /></IconButton>
                </Buttons>
            </Line>
            <Line $mt={8} $gap={2} $align="center">
                <FieldName $w={131}>状态<Latin>(S):</Latin></FieldName>
                <IconButton type="button" $small aria-label="包含"><Icon name="include" size={17} /></IconButton>
                <IconButton type="button" $small aria-label="排除"><Icon name="exclude" size={17} /></IconButton>
                <Spacer />
                <IconButton type="button" $small aria-label="选择"><Icon name="arrow" size={16} /></IconButton>
                <Gap $w={4} />
                <IconButton type="button" $small aria-label="接受"><Icon name="tick" size={16} /></IconButton>
            </Line>
            <ObjectTree>
                <ObjectRow><Icon name="treePart" size={16} /><Icon name="half" size={16} /><Latin>11111.ipt</Latin></ObjectRow>
                {objects.map(o => (
                    <ObjectRow key={o.name} $off={o.off}>
                        <Branch open={o.open} last={o.last} />
                        <Icon name="treeFolder" size={16} />
                        <Icon name={o.icon || 'exclude'} size={16} />
                        {o.latin ? <Latin $big>{o.name}</Latin> : <span>{o.name}</span>}
                    </ObjectRow>
                ))}
            </ObjectTree>
            <Checks>
                <CheckLabel><CheckBox checked={all} onChange={() => setAll(!all)} /><span>显示所有对象<Latin>(A)</Latin></span></CheckLabel>
                <CheckLabel><CheckBox checked={color} onChange={() => setColor(!color)} />使用源零部件的颜色替代</CheckLabel>
                <CheckLabel $off><CheckBox disabled /><span>链接钣金样式<Latin>(L)</Latin></span></CheckLabel>
                <CheckLabel $off><CheckBox disabled />内存节约模式</CheckLabel>
            </Checks>
            <Line $mt={19} $align="center" $gap={8} $pl={12} $pr={62}>
                <Icon name="designView" size={16} />
                <label htmlFor="view">&nbsp;设计视图<Latin>:</Latin></label>
                <Spacer />
                <CheckBox disabled aria-label="关联" />
                <Icon name="link" size={15} />
            </Line>
            <Line $mt={11} $pl={12}>
                <SelectBox $w={400}><select id="view"><option>主要</option></select><Chevron /></SelectBox>
            </Line>
            <ScaleGrid>
                <label htmlFor="scale">比例系数<Latin>(F)</Latin></label>
                <CheckLabel $h={20}><CheckBox />零件镜像</CheckLabel>
                <NumberBox>
                    <input id="scale" defaultValue="1.000 ul" />
                    <button type="button" aria-label="更多"><svg width="6" height="9" viewBox="0 0 6 9" fill="none"><path d="M1 1l3 3.500L1 8" stroke="#333" strokeWidth="2" /></svg></button>
                </NumberBox>
                <SelectBox $w={110} $off><select disabled aria-label="镜像平面"><option>XY 平面</option></select><Chevron color="#a5a5a5" /></SelectBox>
            </ScaleGrid>
            <Line $mt={20} $gap={12} $pl={11} $pr={23}>
                <HelpButton type="button" aria-label="帮助"><Icon name="helpBubble" size={17} /></HelpButton>
                <Spacer />
                <PushButton>确定</PushButton>
                <PushButton type="button">取消</PushButton>
            </Line>
            <Tooltip role="tooltip">实体合并后保留平面间的接缝</Tooltip>
            <Pointer width="13" height="19" viewBox="0 0 13 19"><path d="M1 1v14l3.500-3 2.500 6 2.500-1-2.500-6H12z" fill="#fff" stroke="#000" /></Pointer>
            <Grip width="15" height="14" viewBox="0 0 15 14"><path d="M1 14L15 0M6 14l9-9M11 14l4-4" stroke="#9b9b9b" strokeWidth="2" /></Grip>
        </Dialog>
    )
}

const tabs = ['三维模型', '草图', '标注', '检验', '工具', '管理', '视图', '环境', '快速入门', '协作']

const App = () => {
    const [tab, setTab] = useState('三维模型')
    return (
        <Page>
            <GlobalStyle />
            <TitleBar>
                <Tool $w={32}><Icon name="logo" size={22} /></Tool>
                <Tool><Icon name="newDoc" /></Tool>
                <Tool $w={15}><Caret w={6} /></Tool>
                <Tool><Icon name="open" /></Tool>
                <Tool><Icon name="save" /></Tool>
                <Tool><Icon name="undo" /></Tool>
                <Tool $w={15}><Caret w={6} /></Tool>
                <Tool><Icon name="redo" /></Tool>
                <Tool $w={15}><Caret w={6} color="#6b747c" /></Tool>
                <Divider />
                <Tool><Icon name="home" /></Tool>
                <Tool><Icon name="update" /></Tool>
                <Tool $w={15}><Caret w={6} /></Tool>
                <Tool><Icon name="pick" /></Tool>
                <Tool $w={15}><Caret w={6} /></Tool>
                <Tool><Icon name="material" /></Tool>
                <Tool><Icon name="checker" /></Tool>
                <ComboBox><ComboSelect aria-label="材料"><option>常规</option></ComboSelect><Caret w={10} /></ComboBox>
                <Tool><Icon name="wheel" /></Tool>
                <ComboBox $icon><Icon name="sphere" size={18} /><ComboSelect aria-label="外观"><option>默认</option></ComboSelect><Caret w={10} /></ComboBox>
                <Tool><Icon name="wheelAdd" /></Tool>
                <Tool><Icon name="wheelDel" /></Tool>
                <FormulaTool>fx</FormulaTool>
                <Tool><Icon name="plus" /></Tool>
                <Tool $w={20}><svg width="10" height="9" viewBox="0 0 10 9"><path d="M0 0h10v1.500H0zM0 4h10L5 9z" fill="#c3c9ce" /></svg></Tool>
                <Title><span>Autodesk Inventor Professional 2021</span><span>零件7</span></Title>
                <Tool $w={15}><svg width="6" height="10" viewBox="0 0 6 10"><path d="M0 0l6 5-6 5z" fill="#c3c9ce" /></svg></Tool>
                <Search placeholder="搜索帮助和命令..." aria-label="搜索" />
                <Login><Icon name="user" size={18} />登录</Login>
                <Tool $w={15}><Caret w={6} /></Tool>
                <Tool $w={36}><Icon name="cart" size={19} /></Tool>
                <Divider />
                <Tool $w={34}><Icon name="help" size={19} /></Tool>
                <Tool $w={15}><Caret w={6} /></Tool>
                <WindowButtons>
                    <Tool aria-label="最小化"><svg width="10" height="20" viewBox="0 0 10 20"><path d="M0 14h10v3H0z" fill="#fff" /></svg></Tool>
                    <Tool aria-label="还原"><svg width="16" height="14" viewBox="0 0 16 14" fill="none"><path d="M5 4V1h10v7h-4" stroke="#fff" strokeWidth="2" /><path d="M1 6h10v7H1z" stroke="#fff" strokeWidth="2" /></svg></Tool>
                    <Tool aria-label="关闭"><Cross size={14} color="#fff" sw={2} /></Tool>
                </WindowButtons>
            </TitleBar>
            <TabBar>
                <Tab $file>文件</Tab>
                {tabs.map(t => <Tab key={t} $active={t === tab} onClick={() => setTab(t)}>{t}</Tab>)}
                <Tool $w={88} aria-label="最小化功能区">
                    <svg width="17" height="10" viewBox="0 0 17 10"><rect width="17" height="10" rx="2" fill="#e4e7ea" /><path d="M5 7l3.500-4L12 7z" fill="#333" /></svg>
                    <Caret w={6} />
                </Tool>
            </TabBar>
            <Ribbon>
                <Group $w={95}>
                    <GroupBody><Big w={94} icon="sketch" label="开始创建" second="二维草图" menu /></GroupBody>
                    <Caption>草图</Caption>
                </Group>
                <Group $w={77}>
                    <GroupBody><Big w={76} icon="cylinder" label="圆柱体" menu /></GroupBody>
                    <Caption>基本要素</Caption>
                </Group>
                <Group $w={355}>
                    <GroupBody>
                        <Big w={52} icon="extrude" label="拉伸" />
                        <Big w={45} icon="revolve" label="旋转" />
                        <Columns>
                            <Small w={98} items={[['sweep', '扫掠'], ['loft', '放样'], ['coil', '螺旋扫掠']]} />
                            <Small w={84} items={[['emboss', '凸雕'], ['derive', '衍生'], ['rib', '加强筋']]} />
                            <Small w={60} items={[['decal', '贴图'], ['importIcon', '导入'], ['unfold', '展平']]} />
                        </Columns>
                    </GroupBody>
                    <Caption>创建</Caption>
                </Group>
                <Group $w={367}>
                    <GroupBody>
                        <Big w={51} icon="hole" label="孔" />
                        <Big w={48} icon="fillet" label="圆角" />
                        <Columns $pad={3}>
                            <Small w={69} items={[['chamfer', '倒角'], ['shell', '抽壳'], ['draft', '拔模']]} />
                            <Small w={108} items={[['thread', '螺纹'], ['combine', '合并'], ['thicken', '加厚/ 偏移']]} />
                            <Small items={[['split', '分割'], ['direct', '直接'], ['deleteFace', '删除 面']]} />
                        </Columns>
                    </GroupBody>
                    <Caption>修改<Caret w={9} color="#c3c9ce" /></Caption>
                </Group>
                <Group $w={58}>
                    <GroupBody><Big w={57} icon="shape" label="形状" second="生成器" /></GroupBody>
                    <Caption>探索</Caption>
                </Group>
                <Group $w={133}>
                    <GroupBody>
                        <Big w={62} icon="plane" label="平面" menu />
                        <Columns $pad={3}>
                            <Small w={59} items={[['axis', '轴', true], ['point', '点', true], ['ucs', 'UCS']]} />
                        </Columns>
                    </GroupBody>
                    <Caption>定位特征</Caption>
                </Group>
                <Group $w={174}>
                    <GroupBody>
                        <Columns>
                            <Small w={99} items={[['rect', '矩形'], ['ring', '环形'], ['sketchDriven', '草图驱动']]} />
                            <Small w={60} items={[['mirror', '镜像']]} />
                        </Columns>
                    </GroupBody>
                    <Caption>阵列</Caption>
                </Group>
                <Group $w={147}>
                    <GroupBody>
                        <Big w={76} icon="box" label="长方体" menu />
                        <Columns $pad={3}>
                            <Small w={60} items={[['face', '面'], ['convert', '转换']]} />
                        </Columns>
                    </GroupBody>
                    <Caption>创建自由造型</Caption>
                </Group>
                <Group $w={286}>
                    <GroupBody>
                        <Columns>
                            <Small w={68} items={[['stitch', '缝合'], ['patch', '面片'], ['sculpt', '灌注']]} />
                            <Small w={99} items={[['ruled', '规则曲面'], ['trim', '修剪'], ['extend', '延伸']]} />
                            <Small w={108} items={[['replace', '替换面'], ['repair', '修复实体'], ['fitMesh', '拟合网格面']]} />
                        </Columns>
                    </GroupBody>
                    <Caption>曲面</Caption>
                </Group>
                <Group $w={74}>
                    <GroupBody><Big w={73} icon="stress" label="应力分析" /></GroupBody>
                    <Caption>分析</Caption>
                </Group>
                <Group $w={87}>
                    <GroupBody><Big w={86} icon="sheet" label="转换为钣金" /></GroupBody>
                    <Caption>转换</Caption>
                </Group>
                <RibbonMenu $w={50} aria-label="面板">
                    <svg width="19" height="19" viewBox="0 0 19 19"><circle cx="9.500" cy="9.500" r="9.500" fill="#dcdcdc" /><path d="M5 7h9l-4.500 6z" fill="#4a4a4a" /></svg>
                    <Caret w={6} />
                </RibbonMenu>
            </Ribbon>
            <Workspace>
                <Browser>
                    <BrowserTabs>
                        <BrowserTab $active>模型<Cross size={10} sw={2} /></BrowserTab>
                        <BrowserTab>iLogic<svg width="10" height="10" viewBox="0 0 10 10"><path d="M5 0v10M0 5h10" stroke="#aab2b9" strokeWidth="2" /></svg></BrowserTab>
                        <Spacer />
                        <Icon name="search" size={15} />
                        <svg width="3" height="13" viewBox="0 0 3 13"><path d="M0 1h3v2H0zM0 6h3v2H0zM0 11h3v2H0z" fill="#9aa3ab" /></svg>
                    </BrowserTabs>
                    <Nodes>
                        <Node $root><Icon name="part" /><span>零件<Latin>7</Latin></span></Node>
                        <Node><NodeLink plus /><Icon name="folderPart" /><span>实体<Latin>(2)</Latin></span></Node>
                        <Node><NodeLink plus /><Icon name="views" /><span>视图<Latin>:&nbsp; </Latin>主要</span></Node>
                        <Node><NodeLink plus /><Icon name="folder" />原始坐标系</Node>
                        <Node><NodeLink plus /><Icon name="part" /><Latin>11111.ipt</Latin></Node>
                        <Node><NodeLink end /><Icon name="end" />造型终止</Node>
                    </Nodes>
                </Browser>
                <ViewArea>
                    <Viewport>
                        <Placed $left={460} $top={111}><Model /></Placed>
                        <Placed $left={18} $bottom={40}>
                            <svg width="60" height="60" viewBox="298 920 60 60" fill="none">
                                <path d="M309 968h28" stroke="#1fae2c" /><path d="M307 968l10-5v10z" fill="#1fae2c" />
                                <path d="M336.500 968V955" stroke="#1616a8" strokeWidth="1.500" />
                                <path d="M329 953l7-9 7 9-3-2h-8z" fill="#a5191f" /><path d="M329 955l7-6 6 6-6 6z" fill="#0e12b4" />
                                <text x="297" y="973" fill="#1fae2c" fontFamily="Liberation Serif" fontSize="12">Y</text>
                                <text x="332" y="942" fill="#a5301f" fontFamily="Liberation Serif" fontSize="12">X</text>
                            </svg>
                        </Placed>
                        <Placed $right={1} $top={6}>
                            <svg width="32" height="13" viewBox="0 0 32 13" fill="none"><path d="M1 1.500h11v10H1zM7.500 1v10M7.500 6.500H12" stroke="#e6eaee" strokeWidth="1.300" /><path d="M22 1.500l9 10M31 1.500l-9 10" stroke="#e6eaee" strokeWidth="2" /></svg>
                        </Placed>
                        <Placed $right={33} $top={52}>
                            <svg width="57" height="68" viewBox="0 0 57 68" fill="none">
                                <path d="M4 1h49l4 40-3 26H6L0 41z" fill="#71777b" />
                                <path d="M0 41h57l-3 26H6z" fill="#656b70" />
                                <path d="M12 35h40v10H12z" fill="#6d7276" />
                                <g stroke="#484e52" strokeWidth="1.200"><path d="M20 9v22M15 15l4 2M15 25l4-3M23 11h15v6h-6v-6M27 11v6M23 22h16v7H23M28 22v7M33 22v7M39 47v15M39 54H28v-6M28 54v8M22 50v7l-4 1M22 57l17 5" /></g>
                            </svg>
                        </Placed>
                        <NavBar>
                            <svg width="28" height="224" viewBox="0 0 28 224" fill="none">
                                <circle cx="23" cy="4" r="4" fill="#454b4d" /><path d="M21 2l4 4M25 2l-4 4" stroke="#d5d8d9" />
                                <path d="M4 30a10 10 0 0 1 10-10h10v10a10 10 0 0 1-20 0z" fill="#c4c8c9" /><circle cx="14" cy="30" r="6" stroke="#596062" strokeWidth="1.500" /><path d="M7 37l3-3M21 37l-3-3" stroke="#596062" />
                                <path d="M12 51h5l-2.500 3zM12 129h5l-2.500 3zM12 171h5l-2.500 3z" fill="#474d4f" /><path d="M2 58.500h24" stroke="#484e50" />
                                <path d="M10 87c-1-4-4-7-7-9 1-2 4-1 6 1l-3-10c1-2 2-1 3 0l3 7-1-10c1-2 2-1 3 0l1 10 3-9c1-1 2 0 2 1l-2 9 4-6c1-1 2 0 2 1-2 6-4 10-6 15z" fill="#d7dadb" />
                                <path d="M3 98h16v16H3z" stroke="#454b4d" /><circle cx="18" cy="112" r="5" fill="#c8cccd" /><path d="M22 116l4 4" stroke="#3f4547" strokeWidth="2" />
                                <g stroke="#42484a" strokeWidth="1.300"><ellipse cx="14" cy="151" rx="11" ry="4" /><ellipse cx="14" cy="151" rx="4" ry="11" /><path d="M11 147l5 8" /></g>
                                <path d="M4 189h21v14H4z" fill="#c9cdce" /><path d="M7 193h14v7H7z" fill="#84898b" stroke="#555b5d" /><path d="M4 188l5-5 1 3 8-2 1 4z" fill="#c9cdce" />
                                <circle cx="23" cy="219" r="4" fill="#454b4d" /><path d="M20.500 217.500h5M21 219.500h4l-2 2z" stroke="#d5d8d9" />
                            </svg>
                        </NavBar>
                        <Watermark>
                            <svg width="149" height="170" viewBox="0 0 149 170">
                                <path d="M1 16C20 4 35 0 56 0a93 93 0 0 1 93 93c0 26-10 50-25 65L71 112c28 0 49-22 49-48S100 16 72 16z" fill="#b0ff10" />
                                <path d="M0 18l43 25h28a21 21 0 0 1 0 42H4l99 85H0z" fill="#133a83" />
                            </svg>
                            <BrandCjk><span>锐</span><span>和</span><span>软</span><span>件</span></BrandCjk>
                            <BrandLatin>RUIHESOFT</BrandLatin>
                        </Watermark>
                    </Viewport>
                    <DocTabs>
                        <DocTab $home aria-label="主页"><Icon name="home" size={22} /></DocTab>
                        <DocTab $active>零件7<Cross size={11} color="#99a2aa" sw={2} /></DocTab>
                        <DocTab>11111.ipt</DocTab>
                        <Spacer />
                        <button type="button" aria-label="菜单"><svg width="18" height="16" viewBox="0 0 18 16"><path d="M0 1.500h18M0 8h18M0 14.500h18" stroke="#b4bcc4" strokeWidth="2.500" /></svg></button>
                    </DocTabs>
                </ViewArea>
                <DeriveDialog />
            </Workspace>
            <StatusBar>
                就绪
                <Spacer />
                <Count $w={40} $pad={10}>1</Count>
                <Count $w={38} $pad={8}>3</Count>
            </StatusBar>
        </Page>
    )
}

export default App
